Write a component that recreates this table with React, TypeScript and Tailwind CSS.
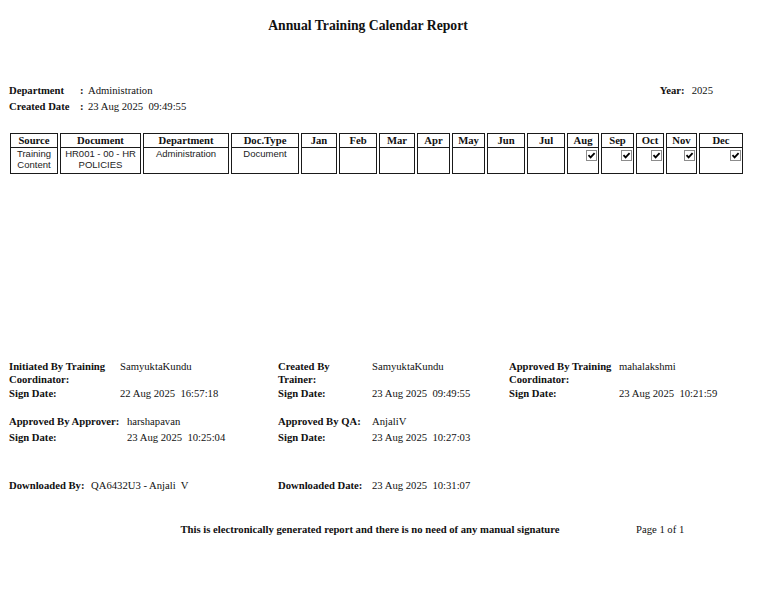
import React from 'react';

const cols = [
  { h: 'Source', w: 'w-[48px]' },
  { h: 'Document', w: 'w-[81px]' },
  { h: 'Department', w: 'w-[86px]' },
  { h: 'Doc.Type', w: 'w-[68px]' },
  { h: 'Jan', w: 'w-[36px]' },
  { h: 'Feb', w: 'w-[38px]' },
  { h: 'Mar', w: 'w-[36px]' },
  { h: 'Apr', w: 'w-[33px]' },
  { h: 'May', w: 'w-[33px]' },
  { h: 'Jun', w: 'w-[38px]' },
  { h: 'Jul', w: 'w-[38px]' },
  { h: 'Aug', w: 'w-[32px]' },
  { h: 'Sep', w: 'w-[33px]' },
  { h: 'Oct', w: 'w-[28px]' },
  { h: 'Nov', w: 'w-[31px]' },
  { h: 'Dec', w: 'w-[44px]' },
];

const body: (string | boolean)[] = [
  'Training Content',
  'HR001 - 00 - HR POLICIES',
  'Administration',
  'Document',
  false, false, false, false, false, false, false,
  true, true, true, true, true,
];

function CheckBox() {
  return (
    <span className="inline-flex w-[11px] h-[11px] border border-[#8c8c8c] bg-white items-center justify-center">
      <svg width="9" height="9" viewBox="0 0 9 9">
        <path d="M1.5 4.2 L3.6 6.4 L7.6 2.2" fill="none" stroke="#000" strokeWidth="1.8" />
      </svg>
    </span>
  );
}

function SignRow({ label, value, lw, className = '' }: { label: string; value: string; lw: string; className?: string }) {
  return (
    <div className={`flex leading-[13px] ${className}`}>
      <div className={`${lw} shrink-0 font-bold pr-[6px]`}>{label}</div>
      <div className="whitespace-pre">{value}</div>
    </div>
  );
}

export default function App() {
  return (
    <div className="w-[768px] h-[594px] bg-white text-[#111] font-['Liberation_Serif','Times_New_Roman',serif] text-[10.67px] overflow-hidden">
      {/* title */}
      <div className="pt-[18px] pr-[32px] text-center text-[13.7px] font-bold leading-[16px]">Annual Training Calendar Report</div>

      {/* header info */}
      <div className="mt-[48px] pl-[9px] flex leading-[16px]">
        <div>
          <div className="flex">
            <span className="w-[71px] font-bold">Department</span>
            <span className="w-[8px] font-bold">:</span>
            <span>Administration</span>
          </div>
          <div className="flex">
            <span className="w-[71px] font-bold">Created Date</span>
            <span className="w-[8px] font-bold">:</span>
            <span className="whitespace-pre">23 Aug 2025  09:49:55</span>
          </div>
        </div>
        <div className="ml-auto mr-[55px] flex">
          <span className="font-bold w-[32px]">Year:</span>
          <span>2025</span>
        </div>
      </div>

      {/* calendar table */}
      <div className="mt-[19px] pl-[10px]">
        <div className="flex gap-x-[2px]">
          {cols.map((c) => (
            <div key={c.h} className={`${c.w} h-[15px] border border-[#1a1a1a] font-bold text-center leading-[12px]`}>
              {c.h}
            </div>
          ))}
        </div>
        <div className="flex gap-x-[2px]">
          {cols.map((c, i) => {
            const v = body[i];
            return (
              <div
                key={c.h}
                className={`${c.w} h-[26px] border border-t-0 border-[#1a1a1a] font-['Liberation_Sans',Arial,sans-serif] text-[9.5px] leading-[11px] text-center text-[#222]`}
              >
                {typeof v === 'string' ? (
                  v
                ) : v ? (
                  <div className="flex justify-end pr-[1px] pt-[2px]">
                    <CheckBox />
                  </div>
                ) : null}
              </div>
            );
          })}
        </div>
      </div>

      {/* signatures */}
      <div className="mt-[186px] pl-[9px] grid grid-cols-[269px_231px_1fr]">
        <div>
          <SignRow lw="w-[111px]" label="Initiated By Training Coordinator:" value="SamyuktaKundu" />
          <SignRow lw="w-[111px]" className="mt-[1px]" label="Sign Date:" value="22 Aug 2025  16:57:18" />
        </div>
        <div>
          <SignRow lw="w-[94px]" label="Created By Trainer:" value="SamyuktaKundu" />
          <SignRow lw="w-[94px]" className="mt-[1px]" label="Sign Date:" value="23 Aug 2025  09:49:55" />
        </div>
        <div>
          <SignRow lw="w-[110px]" label="Approved By Training Coordinator:" value="mahalakshmi" />
          <SignRow lw="w-[110px]" className="mt-[1px]" label="Sign Date:" value="23 Aug 2025  10:21:59" />
        </div>
      </div>

      <div className="mt-[15px] pl-[9px] grid grid-cols-[269px_231px_1fr]">
        <div>
          <SignRow lw="w-[118px]" label="Approved By Approver:" value="harshapavan" />
          <SignRow lw="w-[118px]" className="mt-[3px]" label="Sign Date:" value="23 Aug 2025  10:25:04" />
        </div>
        <div>
          <SignRow lw="w-[94px]" label="Approved By QA:" value="AnjaliV" />
          <SignRow lw="w-[94px]" className="mt-[3px]" label="Sign Date:" value="23 Aug 2025  10:27:03" />
        </div>
      </div>

      <div className="mt-[35px] pl-[9px] grid grid-cols-[269px_1fr]">
        <SignRow lw="w-[82px]" label="Downloaded By:" value="QA6432U3 - Anjali  V" />
        <SignRow lw="w-[94px]" label="Downloaded Date:" value="23 Aug 2025  10:31:07" />
      </div>

      {/* footer */}
      <div className="mt-[31px] flex leading-[13px]">
        <div className="w-[600px] pl-[140px] text-center font-bold">
          This is electronically generated report and there is no need of any manual signature
        </div>
        <div className="ml-[36px]">Page 1 of 1</div>
      </div>
    </div>
  );
}
